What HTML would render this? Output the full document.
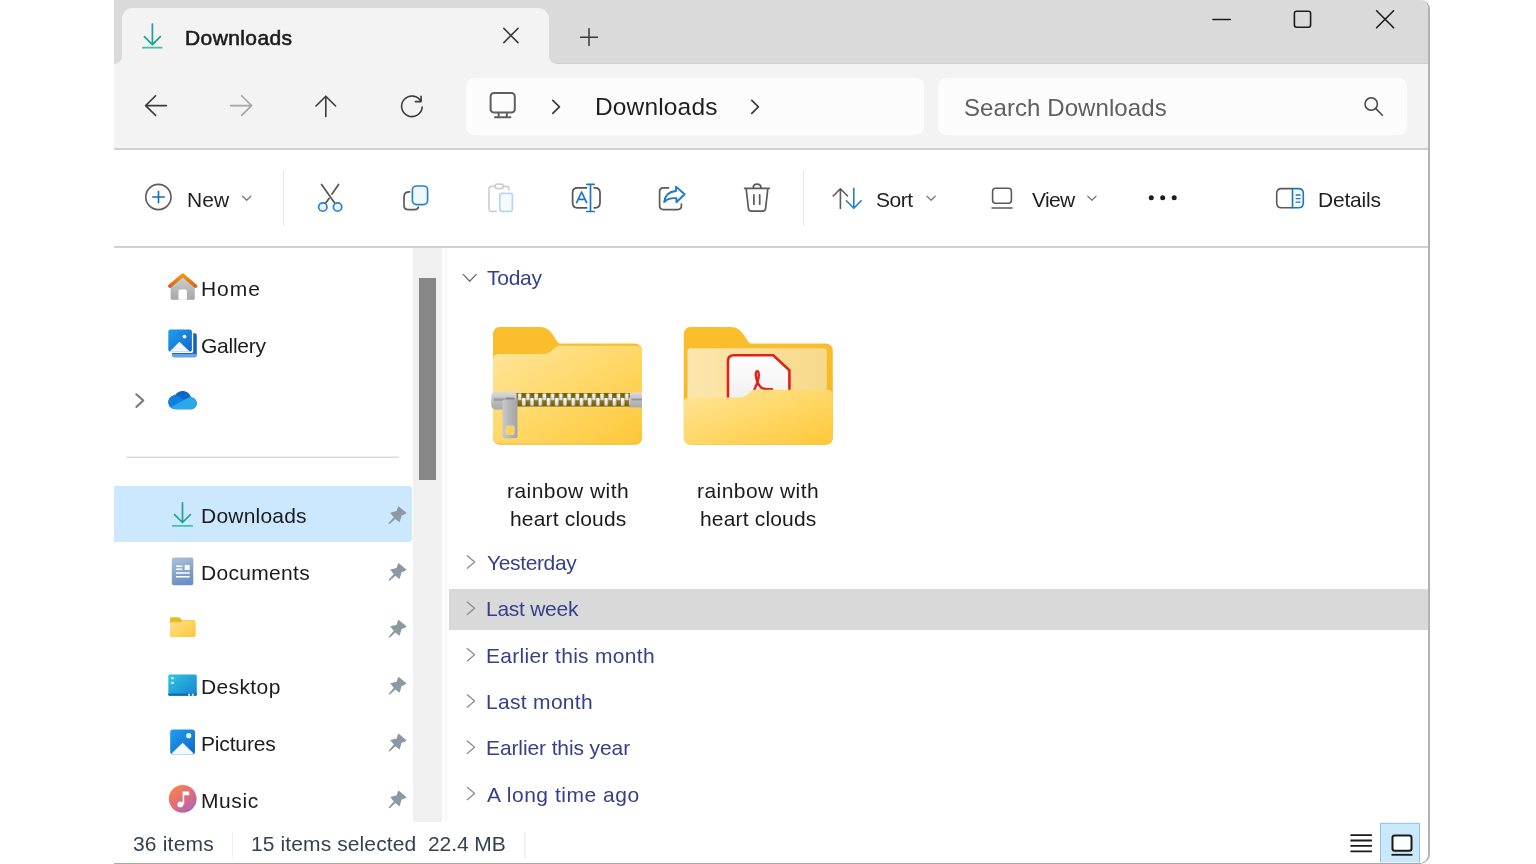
<!DOCTYPE html>
<html lang="en">
<head>
<meta charset="utf-8">
<title>Downloads - File Explorer</title>
<style>
*{box-sizing:border-box;margin:0;padding:0}
html,body{width:1536px;height:864px;overflow:hidden;background:#fff}
body{position:relative;font-family:"Liberation Sans",sans-serif;color:#1b1b1b}
.abs{position:absolute}
#win{position:absolute;left:114px;top:0;width:1316px;height:864px;background:#fff;border-top-right-radius:9px;border-bottom-right-radius:10px;overflow:hidden;border-right:2px solid #b2b2b2;border-bottom:1.5px solid #a8a8a8}
#titlebar{position:absolute;left:0;top:0;width:1314px;height:64px;background:#dadada;border-bottom:1.5px solid #cdcdcd}
#tab{position:absolute;left:8px;top:8px;width:427px;height:60px;background:#f3f3f3;border-radius:11px 11px 0 0}
#tabflareL{position:absolute;left:0;top:54px;width:8px;height:10px;background:#f3f3f3}
#tabflareL i{display:block;width:8px;height:10px;background:#dadada;border-bottom-right-radius:8px}
#tabflareR{position:absolute;left:435px;top:54px;width:8px;height:10px;background:#f3f3f3}
#tabflareR i{display:block;width:8px;height:10px;background:#dadada;border-bottom-left-radius:8px}
#navbar{position:absolute;left:0;top:64px;width:1314px;height:86px;background:#f3f3f3;border-bottom:2px solid #d0d0d0}
#addr{position:absolute;left:352px;top:13.5px;width:458px;height:57px;background:#fcfcfc;border-radius:8px}
#search{position:absolute;left:824px;top:13.5px;width:469px;height:57px;background:#fcfcfc;border-radius:8px}
#toolbar{position:absolute;left:0;top:150px;width:1314px;height:98px;background:#fff;border-bottom:2px solid #cfcfcf}
.tsep{position:absolute;top:20px;width:1px;height:56px;background:#e6e6e6}
.t{position:absolute;white-space:nowrap;line-height:1;will-change:transform;-webkit-font-smoothing:antialiased}
.tb{font-size:21px;color:#1f1f1f}
#side{position:absolute;left:0;top:248px;width:298px;height:578px;background:#fff}
.sel{position:absolute;left:0;top:238.200px;width:297.800px;height:56px;background:#cce8ff;border-radius:0 3px 3px 0}
.sl{font-size:21px;color:#1b1b1b}
#sbar{position:absolute;left:299.300px;top:248px;width:28.800px;height:573.700px;background:#f0f0f0}
#sbar i{position:absolute;left:5.800px;top:30.200px;width:16.900px;height:201.600px;background:#878787}
#content{position:absolute;left:334px;top:248px;width:980px;height:578px;background:#fff}
.grp{font-size:21px;color:#36408a}
.hl{position:absolute;left:335px;top:589px;width:979px;height:41px;background:#d9d9d9}
.fl{font-size:21px;color:#1b1b1b;text-align:center}
#status{position:absolute;left:0;top:826px;width:1314px;height:37px;background:#fff}
.st{font-size:21px;color:#33424f}
svg{position:absolute;overflow:visible}
</style>
</head>
<body>
<div id="win">
  <div id="titlebar"></div>
  <div id="tab"></div>
  <div id="navbar">
    <div id="addr"></div>
    <div id="search"></div>
  </div>
  <div id="tabflareL"><i></i></div>
  <div id="tabflareR"><i></i></div>
  <div id="toolbar"><div class="tsep" style="left:169px"></div><div class="tsep" style="left:689px"></div></div>
  <div id="side"><div class="sel"></div></div>
  <div id="sbar"><i></i></div>
  <div id="content"></div>
  <div class="hl"></div>
  <div id="status"><div class="abs" style="left:117.500px;top:6px;width:1.500px;height:26px;background:#f1f1f1"></div><div class="abs" style="left:410px;top:6px;width:1.500px;height:26px;background:#f1f1f1"></div></div>
  <div class="abs" style="left:331px;top:248px;width:1.600px;height:574px;background:#f8f8f8"></div>
</div>
<!-- TEXT -->
<div class="t" id="t_tab" style="left:184.7px;top:26.7px;font-size:21px;-webkit-text-stroke:0.6px #1b1b1b;letter-spacing:0.4px">Downloads</div>
<div class="t" id="t_addr" style="left:594.5px;top:95px;font-size:24.5px;color:#1f1f1f;letter-spacing:0.15px">Downloads</div>
<div class="t" id="t_search" style="left:964px;top:95.7px;font-size:24px;color:#5f5f5f;letter-spacing:0.08px">Search Downloads</div>
<div class="t tb" id="t_new" style="left:187.4px;top:189.1px;letter-spacing:0.1px">New</div>
<div class="t tb" id="t_sort" style="left:875.7px;top:189.1px;letter-spacing:-0.47px">Sort</div>
<div class="t tb" id="t_view" style="left:1031.5px;top:189.1px;letter-spacing:-0.63px">View</div>
<div class="t tb" id="t_details" style="left:1318px;top:189.1px;letter-spacing:-0.2px">Details</div>
<div class="t sl" id="s_home" style="left:200.7px;top:277.8px;letter-spacing:0.93px">Home</div>
<div class="t sl" id="s_gallery" style="left:201.3px;top:334.6px;letter-spacing:-0.25px">Gallery</div>
<div class="t sl" id="s_downloads" style="left:200.7px;top:505.2px;letter-spacing:0.21px">Downloads</div>
<div class="t sl" id="s_documents" style="left:200.7px;top:562px;letter-spacing:0.31px">Documents</div>
<div class="t sl" id="s_desktop" style="left:200.7px;top:675.8px;letter-spacing:0.38px">Desktop</div>
<div class="t sl" id="s_pictures" style="left:200.7px;top:732.6px;letter-spacing:-0.16px">Pictures</div>
<div class="t sl" id="s_music" style="left:200.7px;top:789.5px;letter-spacing:0.6px">Music</div>
<div class="t grp" id="g_today" style="left:487.3px;top:267.4px;letter-spacing:-0.25px">Today</div>
<div class="t grp" id="g_yesterday" style="left:486.7px;top:552px;letter-spacing:-0.36px">Yesterday</div>
<div class="t grp" id="g_lastweek" style="left:485.7px;top:598.2px;letter-spacing:-0.27px">Last week</div>
<div class="t grp" id="g_etm" style="left:485.7px;top:644.7px;letter-spacing:0.31px">Earlier this month</div>
<div class="t grp" id="g_lastmonth" style="left:485.7px;top:691px;letter-spacing:0.31px">Last month</div>
<div class="t grp" id="g_ety" style="left:485.7px;top:737.2px;letter-spacing:-0.11px">Earlier this year</div>
<div class="t grp" id="g_long" style="left:487.3px;top:783.5px;letter-spacing:0.53px">A long time ago</div>
<div class="t fl" id="f1a" style="left:506.8px;top:480.1px;letter-spacing:0.45px">rainbow with</div>
<div class="t fl" id="f1b" style="left:509.6px;top:508.2px;letter-spacing:0.17px">heart clouds</div>
<div class="t fl" id="f2a" style="left:697.1px;top:480.1px;letter-spacing:0.45px">rainbow with</div>
<div class="t fl" id="f2b" style="left:699.9px;top:508.2px;letter-spacing:0.17px">heart clouds</div>
<div class="t st" id="st_items" style="left:132.8px;top:833px;letter-spacing:0.19px">36 items</div>
<div class="t st" id="st_sel" style="left:251.2px;top:833px;letter-spacing:0.11px">15 items selected</div>
<div class="t st" id="st_size" style="left:427.8px;top:833px;letter-spacing:-0.07px">22.4 MB</div>

<!-- ICONS -->
<svg id="ov" width="1536" height="864" viewBox="0 0 1536 864" style="left:0;top:0" fill="none" stroke-linecap="round" stroke-linejoin="round">
<defs>
<linearGradient id="gTeal" x1="0" y1="0" x2="0" y2="1"><stop offset="0" stop-color="#2a9c8c"/><stop offset="1" stop-color="#1aa38c"/></linearGradient>
</defs>
<!-- tab download icon -->
<g stroke="#22a18c" stroke-width="1.7">
<path d="M152.4 24v20.3M144.4 36.6l8 8 8-8"/>
<path d="M142.8 47.7h19" stroke="#3fc2a8"/>
</g>
<!-- tab close / new tab -->
<g stroke="#3a3a3a" stroke-width="1.5">
<path d="M503.8 28.4l14.2 14.2M518 28.4l-14.2 14.2"/>
<path d="M580.6 37.2h16.8M589 28.8v16.8"/>
</g>
<!-- window controls -->
<g stroke="#1c1c1c" stroke-width="1.6">
<path d="M1213 19.5h17.2"/>
<rect x="1294.4" y="11.3" width="16.2" height="16" rx="2.2"/>
<path d="M1376.6 10.8l17 17M1393.6 10.8l-17 17"/>
</g>
<!-- nav arrows -->
<g stroke="#3c3c3c" stroke-width="1.6">
<path d="M145.6 105.6h20.8M155.6 95.8l-10 9.8 10 9.8"/>
<path d="M325.8 96.2v20.4M316 106l9.8-9.8 9.8 9.8"/>
<path d="M421.100 101.600A10.300 10.300 0 1 0 422.200 107M421.100 96.300v5.300h-5.800"/>
</g>
<path d="M230.6 105.6h20.8M241.6 95.8l10 9.8-10 9.8" stroke="#a6a6a6" stroke-width="1.6"/>
<!-- address monitor + chevrons -->
<g stroke="#5e5e5e" stroke-width="2">
<rect x="490.600" y="93" width="24.200" height="19.600" rx="3.400"/>
<path d="M498.6 113v4M506.8 113v4M495 117.3h15.4"/>
</g>
<g stroke="#3a3a3a" stroke-width="1.7">
<path d="M552.8 100.4l6.6 6.5-6.6 6.5"/>
<path d="M751.8 100.4l6.6 6.5-6.6 6.5"/>
</g>
<!-- search magnifier -->
<g stroke="#444" stroke-width="1.5">
<circle cx="1371.2" cy="104" r="6.2"/>
<path d="M1375.8 108.6l6.6 6.6"/>
</g>
<!-- TOOLBAR -->
<g stroke-width="1.7">
<!-- new -->
<circle cx="158.4" cy="197" r="12.6" stroke="#5a5a5a" stroke-width="1.6"/>
<path d="M152.8 197h11.4M158.5 191.2v11.6" stroke="#0f6cbd" stroke-width="1.6"/>
<path d="M242.6 196.2l4.1 4.1 4.1-4.1" stroke="#7a7a7a" stroke-width="1.3"/>
<!-- scissors -->
<path d="M321.6 184.4l13.4 19M338.6 184.4l-6.6 9.6M329 198.4l-3.6 5" stroke="#555"/>
<circle cx="322.8" cy="207" r="4.2" stroke="#2e80cc" fill="#eaf6ff"/>
<circle cx="337.6" cy="207" r="4.2" stroke="#2e80cc" fill="#eaf6ff"/>
<!-- copy -->
<path d="M409.6 191.8c-3.4 0-5.6 1.6-5.6 5v8.4c0 2.8 1.6 4.4 4.4 4.4h6.4c1.8 0 3-0.8 3.7-2.4" stroke="#5a5a5a"/>
<rect x="412.4" y="186" width="15.2" height="18.6" rx="4" stroke="#2e80cc" fill="#f0f8ff"/>
<!-- paste (disabled) -->
<path d="M496.2 211.4h-4.6c-1.6 0-2.6-1-2.6-2.6v-19.8c0-1.6 1-2.6 2.6-2.6h3.6M503 186.4h3.4c1.6 0 2.6 1 2.6 2.6v1" stroke="#cfcfcf"/>
<rect x="495" y="184.2" width="8.2" height="4.4" rx="2.2" stroke="#cfcfcf"/>
<rect x="499.8" y="193.4" width="12.6" height="18" rx="2.4" stroke="#b9d6ef" fill="#f6fbff"/>
<!-- rename -->
<path d="M586.6 187.8h-9c-3 0-5 2-5 5v10c0 3 2 5 5 5h9M594.2 187.8h0.8c3 0 5 2 5 5v10c0 3-2 5-5 5h-0.8" stroke="#555"/>
<path d="M590.5 184.4v27M586.8 184.3h7.4M586.8 211.5h7.4" stroke="#1f74c4"/>
<path d="M576.6 202.6l5-10.6 5 10.6M578.2 199.4h6.8" stroke="#1f74c4"/>
<!-- share -->
<path d="M668.6 187.8h-5.2c-2.4 0-3.8 1.4-3.8 3.8v14.2c0 2.400 1.400 3.800 3.800 3.800h14.2c2.400 0 3.800-1.400 3.800-3.800v-1.600" stroke="#5a5a5a"/>
<path d="M676 186.600l8.600 7.600-8.200 8v-4c-5.400-0.400-9.400 0.800-12.200 3.800 0.600-6.200 4.600-10.400 11.800-11z" stroke="#2178c8" stroke-width="1.900"/>
<!-- delete -->
<path d="M744.600 188.300h24.600M753.200 188c0-2.400 1.600-3.800 3.900-3.800s3.900 1.400 3.900 3.800M746.200 189l2.200 19.400c0.200 1.800 1.200 2.700 2.900 2.700h11.400c1.700 0 2.700-0.900 2.900-2.700l2.200-19.400M753.900 194.800v9.400M759.700 194.800v9.400" stroke="#5a5a5a"/>
<!-- sort -->
<path d="M840.400 188.800v19.600M833.200 196l7.200-7.200 7.200 7.200" stroke="#5a5a5a" stroke-width="1.6"/>
<path d="M853.800 188.400v19.600M846.400 200.800l7.400 7.400 7.400-7.400" stroke="#1f7fd4" stroke-width="1.6"/>
<path d="M927 196.200l4.100 4.100 4.100-4.100" stroke="#7a7a7a" stroke-width="1.3"/>
<!-- view -->
<rect x="992.600" y="188.300" width="18.800" height="15" rx="3" stroke="#5a5a5a" stroke-width="1.600"/>
<path d="M992 208h20" stroke="#5a5a5a" stroke-width="1.600"/>
<path d="M1087.800 196.200l4.100 4.100 4.100-4.100" stroke="#7a7a7a" stroke-width="1.3"/>
<!-- details -->
<path d="M1292.500 188.600h-11c-3 0-4.800 1.800-4.800 4.800v9.600c0 3 1.800 4.800 4.800 4.800h11" stroke="#5a5a5a" stroke-width="1.600"/>
<path d="M1292.500 188.600h6c3 0 4.800 1.800 4.800 4.800v9.600c0 3-1.800 4.800-4.800 4.800h-6z" stroke="#1f74c4" stroke-width="1.600" fill="#f2f9ff"/>
<path d="M1296.200 195h3.800M1296.200 198.600h3.800M1296.200 202.200h3.800" stroke="#1f74c4" stroke-width="1.3"/>
</g>
<g fill="#1c1c1c" stroke="none">
<circle cx="1151.300" cy="197.700" r="2.500"/><circle cx="1162.700" cy="197.700" r="2.500"/><circle cx="1174.200" cy="197.700" r="2.500"/>
</g>
<!-- SIDEBAR -->
<defs>
<linearGradient id="gRoof" x1="0" y1="0" x2="0" y2="1"><stop offset="0" stop-color="#ee9a10"/><stop offset="1" stop-color="#d8641c"/></linearGradient>
<linearGradient id="gWall" x1="0" y1="0" x2="0" y2="1"><stop offset="0" stop-color="#d2d2d2"/><stop offset="1" stop-color="#a6a6a6"/></linearGradient>
<linearGradient id="gBlue" x1="0" y1="0" x2="1" y2="1"><stop offset="0" stop-color="#1f9ff2"/><stop offset="1" stop-color="#1565c4"/></linearGradient>
<linearGradient id="gDoc" x1="0" y1="0" x2="0.3" y2="1"><stop offset="0" stop-color="#adc2da"/><stop offset="1" stop-color="#6a91c6"/></linearGradient>
<linearGradient id="gDesk" x1="0" y1="0" x2="1" y2="1"><stop offset="0" stop-color="#2fc6e0"/><stop offset="1" stop-color="#1a80d6"/></linearGradient>
<linearGradient id="gMusic" x1="0.15" y1="0.1" x2="0.85" y2="0.95"><stop offset="0" stop-color="#f5834a"/><stop offset="0.55" stop-color="#dd6a80"/><stop offset="1" stop-color="#a866c4"/></linearGradient>
<linearGradient id="gFold" x1="0" y1="0" x2="1" y2="1"><stop offset="0" stop-color="#ffe08a"/><stop offset="1" stop-color="#ffc73a"/></linearGradient>
</defs>
<g stroke="none">
<!-- home -->
<path d="M170.600 285.500l12.100-10 12.100 10v12.400c0 1.200-0.700 1.900-1.900 1.900h-20.400c-1.200 0-1.900-0.700-1.900-1.900z" fill="url(#gWall)"/>
<path d="M178.500 299.800v-8.300c0-1.300 0.700-2 2-2h4.400c1.300 0 2 0.700 2 2v8.300z" fill="#fff"/>
<path d="M169.800 286.200l12.900-11 12.900 11" stroke="url(#gRoof)" stroke-width="3.600" fill="none" stroke-linecap="round"/>
<!-- gallery -->
<path d="M193.200 333.200h1.600c1.200 0 2 0.800 2 2v19.400c0 1.200-0.800 2-2 2h-20.800c-1.200 0-2-0.800-2-2v-1.600h19.200c1.200 0 2-0.800 2-2z" fill="#1666c0"/>
<path d="M172 354h19.200c1.200 0 2-0.800 2-2v2h3.600v1.600c0 1.200-0.800 2-2 2h-20.800c-1.200 0-2-0.800-2-2z" fill="#6ea2dc"/>
<rect x="168.300" y="329.400" width="23.600" height="22.300" rx="2.200" fill="url(#gBlue)"/>
<path d="M169.600 351.700l9.800-10 10.600 10z" fill="#f4f6ff"/>
<circle cx="184.500" cy="336.600" r="1.900" fill="#eaffff"/>
<!-- onedrive -->
<path d="M176 409.300c-4.200 0-7.600-2.900-7.600-7 0-3.900 2.900-6.700 6.600-7 1.500-2.600 4.300-4.200 7.600-4.200 4 0 7.300 2.500 8.400 6.100 3.300 0.300 5.800 2.900 5.800 6.100 0 3.400-2.700 6-6.200 6z" fill="#0c66c8"/>
<path d="M168.400 402.300c0-3.900 2.900-6.700 6.600-7 2.400 0 4.300 0.800 5.900 2.300l6 5-10.900 6.700c-4.200 0-7.600-2.900-7.600-7z" fill="#1280da"/>
<path d="M171 407.300l16.900-9.500c0.900-0.500 2-0.700 3.100-0.600 3.300 0.300 5.800 2.900 5.800 6.100 0 3.400-2.700 6-6.200 6h-14.600c-2 0-3.700-0.700-5-2z" fill="#29a9ec"/>
<!-- downloads (side) -->
</g>
<g stroke="#22a18c" stroke-width="1.700">
<path d="M182.500 502.800v19.600M174.600 514.600l7.900 7.900 7.900-7.900"/>
<path d="M172.800 525.900h19.400" stroke="#3fc2a8"/>
</g>
<g stroke="none">
<!-- documents -->
<rect x="171.800" y="557.400" width="21.500" height="27.800" rx="2" fill="url(#gDoc)"/>
<path d="M176 565.400h6.300v1.500h-6.300zM176 568.500h6.300v1.500h-6.300zM184.700 565h5v5h-5zM176 572.200h13.700v1.600h-13.700zM176 575.900h13.700v1.600h-13.700z" fill="#fff"/>
<!-- folder small -->
<path d="M170 619c0-1 0.600-1.700 1.700-1.700h6.600c0.900 0 1.500 0.300 2 0.900l1.700 2.100h11.700c1 0 1.700 0.700 1.700 1.700v13.200c0 1-0.700 1.700-1.700 1.700h-22c-1 0-1.700-0.700-1.700-1.700z" fill="#e9bb1e"/>
<path d="M170 624c0-1 0.700-1.700 1.700-1.700h8c0.900 0 1.500-0.300 2.100-0.900l0.600-0.600h11.300c1 0 1.700 0.700 1.700 1.700v12.700c0 1-0.700 1.700-1.700 1.700h-22c-1 0-1.700-0.700-1.700-1.700z" fill="url(#gFold)"/>
<!-- desktop -->
<rect x="168.300" y="674.500" width="28.500" height="21.300" rx="1.600" fill="url(#gDesk)"/>
<path d="M168.300 693.600h28.500v0.600c0 1-0.600 1.600-1.600 1.600h-25.300c-1 0-1.600-0.600-1.600-1.600z" fill="#0f6cad"/>
<path d="M188.200 693.800h1.900v2h-1.900zM191.900 693.800h1.900v2h-1.900z" fill="#e6f6ff"/>
<path d="M170.900 677h3v2.200h-3zM170.900 681.700h3v2.300h-3z" fill="#a6f3f4"/>
<!-- pictures -->
<rect x="170.200" y="729.600" width="24.800" height="24.800" rx="3" fill="url(#gBlue)"/>
<path d="M171.800 753.300l10.900-10.600 10.700 10.600c-0.400 0.700-1 1.100-1.900 1.100h-17.800c-0.900 0-1.500-0.400-1.900-1.100z" fill="#f2f9ff"/>
<circle cx="188.700" cy="735.700" r="2.600" fill="#d8fbff"/>
<!-- music -->
<circle cx="182.700" cy="798.800" r="13.900" fill="url(#gMusic)"/>
<circle cx="180.300" cy="804.400" r="2.900" fill="#fff"/>
<path d="M182.600 791.400h6.600v3.800h-5v9.400h-1.600z" fill="#fff"/>
</g>
<!-- pins -->
<g fill="#8b99a3" stroke="none">
<path d="M398.6 506.2l8 6.8c-1.400 1.300-3.200 2-5 2.400l-2 6.800c-1.500-1-2.900-2.100-4.100-3.300l-5.600 4.900c-0.800 0.600-1.600-0.300-1-1l4.900-5.600c-1.300-1.400-2.500-2.900-3.600-4.500l6.500-1.600c0.300-1.800 0.900-3.400 1.900-4.900z" transform="translate(0 0.0)"/>
<path d="M398.6 506.2l8 6.8c-1.400 1.300-3.200 2-5 2.400l-2 6.800c-1.500-1-2.900-2.100-4.100-3.300l-5.600 4.900c-0.800 0.600-1.600-0.300-1-1l4.900-5.600c-1.300-1.400-2.500-2.900-3.600-4.500l6.500-1.600c0.300-1.800 0.900-3.400 1.900-4.900z" transform="translate(0 56.8)"/>
<path d="M398.6 506.2l8 6.8c-1.400 1.300-3.200 2-5 2.400l-2 6.800c-1.500-1-2.900-2.100-4.100-3.300l-5.600 4.900c-0.800 0.600-1.600-0.300-1-1l4.900-5.600c-1.300-1.400-2.500-2.900-3.600-4.500l6.500-1.600c0.300-1.800 0.900-3.400 1.900-4.900z" transform="translate(0 113.6)"/>
<path d="M398.6 506.2l8 6.8c-1.400 1.300-3.200 2-5 2.400l-2 6.800c-1.500-1-2.900-2.100-4.100-3.300l-5.600 4.900c-0.800 0.600-1.600-0.300-1-1l4.900-5.600c-1.300-1.400-2.500-2.900-3.600-4.500l6.500-1.600c0.300-1.800 0.900-3.400 1.900-4.900z" transform="translate(0 170.6)"/>
<path d="M398.6 506.2l8 6.8c-1.400 1.300-3.200 2-5 2.400l-2 6.800c-1.500-1-2.900-2.100-4.100-3.300l-5.600 4.900c-0.800 0.600-1.600-0.300-1-1l4.900-5.600c-1.300-1.400-2.500-2.900-3.600-4.500l6.500-1.600c0.300-1.800 0.900-3.400 1.900-4.900z" transform="translate(0 227.4)"/>
<path d="M398.6 506.2l8 6.8c-1.400 1.300-3.200 2-5 2.400l-2 6.800c-1.500-1-2.900-2.100-4.100-3.300l-5.600 4.900c-0.800 0.600-1.600-0.300-1-1l4.900-5.600c-1.300-1.400-2.500-2.900-3.600-4.500l6.500-1.600c0.300-1.800 0.900-3.400 1.900-4.900z" transform="translate(0 284.2)"/>
</g>
<!-- side chevron -->
<path d="M136.300 394.300l7 6.200-7 6.400" stroke="#7a7a7a" stroke-width="2.100"/>
<path d="M126.400 457.200h272.200" stroke="#dadada" stroke-width="1.400" stroke-linecap="butt"/>
<!-- CONTENT -->
<defs>
<linearGradient id="gFront" x1="0" y1="0" x2="1" y2="1"><stop offset="0" stop-color="#ffe59c"/><stop offset="0.5" stop-color="#ffd868"/><stop offset="1" stop-color="#ffc738"/></linearGradient>
<linearGradient id="gBack" x1="0" y1="0" x2="0" y2="1"><stop offset="0" stop-color="#fbbf2c"/><stop offset="1" stop-color="#f3b32a"/></linearGradient>
<linearGradient id="gSilver" x1="0" y1="0" x2="0" y2="1"><stop offset="0" stop-color="#dcdcdc"/><stop offset="0.5" stop-color="#bdbdbd"/><stop offset="1" stop-color="#a9a9a9"/></linearGradient>
<linearGradient id="gSilverH" x1="0" y1="0" x2="1" y2="0"><stop offset="0" stop-color="#c9c9c9"/><stop offset="0.5" stop-color="#b4b4b4"/><stop offset="1" stop-color="#a4a4a4"/></linearGradient>
<linearGradient id="gBand" x1="0" y1="0" x2="0" y2="1"><stop offset="0" stop-color="#6a5608"/><stop offset="0.5" stop-color="#8c7a22"/><stop offset="1" stop-color="#6e5b0c"/></linearGradient>
<linearGradient id="gTooth" x1="0" y1="0" x2="0" y2="1"><stop offset="0" stop-color="#ffffff"/><stop offset="1" stop-color="#d6d2d6"/></linearGradient>
<linearGradient id="gSheet" x1="0" y1="0" x2="1" y2="0"><stop offset="0" stop-color="#fbe6ac"/><stop offset="1" stop-color="#f6d98a"/></linearGradient>
<linearGradient id="gPage" x1="0" y1="0" x2="0" y2="1"><stop offset="0" stop-color="#ffffff"/><stop offset="1" stop-color="#ececec"/></linearGradient>
<pattern id="pTeeth" x="517.600" y="393" width="8.240" height="14" patternUnits="userSpaceOnUse">
<rect x="0.300" y="0.500" width="3.500" height="6.800" rx="0.800" fill="url(#gTooth)"/>
<rect x="4.400" y="5" width="3.500" height="7.800" rx="0.800" fill="url(#gTooth)"/>
</pattern>
</defs>
<g stroke="#8c8c8c" stroke-width="1.300">
<path d="M467.300 555.80l7.300 6.200-7.300 6.200"/>
<path d="M467.300 602.05l7.300 6.200-7.300 6.200"/>
<path d="M467.300 648.50l7.300 6.200-7.300 6.200"/>
<path d="M467.300 694.80l7.300 6.200-7.300 6.200"/>
<path d="M467.300 741.00l7.300 6.200-7.300 6.200"/>
<path d="M467.300 787.30l7.300 6.200-7.300 6.200"/>
</g>
<path d="M463.200 274.400l6.500 6.800 6.500-6.800" stroke="#6e6e6e" stroke-width="1.300"/>
<g stroke="none">
<!-- folder 1 zip -->
<path d="M493 334.200c0-4.600 2.800-7.300 7.500-7.300h39.500c6 0 10 3 13 8l3.600 5.600c1.400 2.200 2.400 3.100 4.400 3.100h73.500c4.600 0 7.500 2.800 7.500 7.500v86.100c0 4.600-2.800 7.500-7.500 7.500h-134c-4.600 0-7.500-2.800-7.500-7.500z" fill="url(#gBack)"/>
<path d="M493 359.400c0-3.400 2-5.500 5.500-5.500h45c3 0 5-0.800 7-2.400l4.400-3.600c1.800-1.400 3.200-2.100 5.400-2.100h76.200c3.400 0 5.500 2 5.500 5.500v85c0 4.600-2.800 7.500-7.500 7.500h-134c-4.600 0-7.500-2.800-7.500-7.500z" fill="url(#gFront)"/>
<rect x="516" y="393.100" width="115" height="13.400" fill="url(#gBand)"/>
<rect x="517.600" y="393" width="112.600" height="14" fill="url(#pTeeth)"/>
<path d="M629.800 392.400h12.200v15h-12.200z" fill="url(#gSilver)"/>
<path d="M631.500 398.600h10.500v1.800h-10.500z" fill="#8f949c"/>
<path d="M491.300 396c0-2.800 1.800-4.600 4.600-4.600h17.900c1.700 0 2.800 1.100 2.800 2.800v12.600c0 1.700-1.100 2.800-2.800 2.800h-17.900c-2.800 0-4.600-1.800-4.600-4.600z" fill="url(#gSilver)"/>
<path d="M494 398.300h20.500v2.600h-20.500z" fill="#9a9ea4"/>
<path d="M506 397.600h8.600v5.400h-8.600z" fill="#868a90"/>
<path d="M502.500 401.600c0-1.200 0.800-2 2-2h11c1.200 0 2 0.800 2 2v34.700c0 1.200-0.800 2-2 2h-11c-1.200 0-2-0.800-2-2z" fill="url(#gSilverH)"/>
<rect x="505.800" y="426" width="8.400" height="8.400" rx="1" fill="#ffd24c" stroke="#d9d4c0" stroke-width="1"/>
<!-- folder 2 pdf -->
<path d="M683.8 334.200c0-4.600 2.800-7.300 7.500-7.300h39.500c6 0 10 3 13 8l3.600 5.600c1.400 2.200 2.400 3.100 4.400 3.100h73.500c4.600 0 7.500 2.800 7.500 7.500v86.100c0 4.600-2.800 7.500-7.500 7.500h-134c-4.600 0-7.500-2.800-7.500-7.500z" fill="url(#gBack)"/>
<path d="M687.500 351.200c0-1.800 1.200-3 3-3h133.300c1.800 0 3 1.200 3 3v60h-139.300z" fill="url(#gSheet)"/>
<path d="M728 410v-49c0-3.800 2.200-5.800 6-5.800h39.200l16.200 15v39.800z" fill="url(#gPage)" stroke="#e0231a" stroke-width="2.600" stroke-linejoin="round"/>
<path d="M754.400 389.400c2.200-4.600 4.400-10 4.400-14.200c0-2.600-0.600-4-1.600-4s-1.600 1.600-1.400 4.200c0.400 4.600 2.600 9.600 5.600 12.400c1.800 1.400 4.600 1.500 10.600 1.500" fill="none" stroke="#e0231a" stroke-width="2.400" stroke-linecap="round"/>
<path d="M683.800 402.900c0-3.400 2-5.500 5.500-5.500h50c3 0 5-0.800 7-2.400l4.400-3.400c1.800-1.400 3.200-1.800 5.400-1.800h71.200c3.400 0 5.500 2 5.500 5.500v41.700c0 4.600-2.800 7.500-7.500 7.500h-134c-4.600 0-7.500-2.800-7.500-7.500z" fill="url(#gFront)"/>
</g>
<!-- status view buttons -->
<path d="M1380.500 862.500V823.300H1419.500V862.500" fill="#c9e8fa" stroke="#8cc3e6" stroke-width="1" stroke-linecap="butt" stroke-linejoin="miter"/>
<g stroke="#1a1a1a" stroke-width="1.800" stroke-linecap="butt">
<path d="M1350.400 835.100h21.500M1350.400 840.500h21.500M1350.400 845.900h21.500M1350.400 851.300h21.500"/>
<path d="M1391.500 854.800h21"/>
</g>
<rect x="1392.500" y="835.400" width="19" height="15.400" rx="2.200" fill="#fff" stroke="#1a1a1a" stroke-width="2"/>
</svg>

</body>
</html>
